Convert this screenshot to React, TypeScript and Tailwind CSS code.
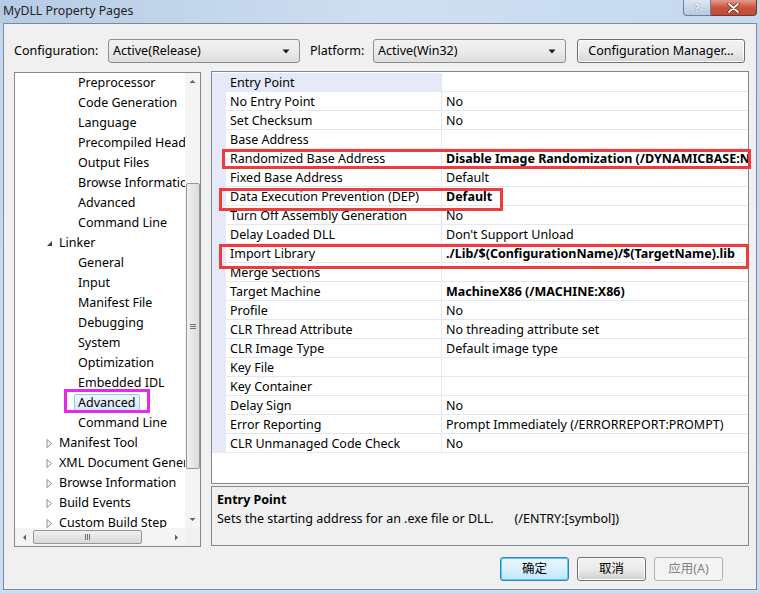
import React from "react";

type Row = { name: string; value: string; bold?: boolean };

const rows: Row[] = [
  { name: "Entry Point", value: "" },
  { name: "No Entry Point", value: "No" },
  { name: "Set Checksum", value: "No" },
  { name: "Base Address", value: "" },
  { name: "Randomized Base Address", value: "Disable Image Randomization (/DYNAMICBASE:NO)", bold: true },
  { name: "Fixed Base Address", value: "Default" },
  { name: "Data Execution Prevention (DEP)", value: "Default", bold: true },
  { name: "Turn Off Assembly Generation", value: "No" },
  { name: "Delay Loaded DLL", value: "Don't Support Unload" },
  { name: "Import Library", value: "./Lib/$(ConfigurationName)/$(TargetName).lib", bold: true },
  { name: "Merge Sections", value: "" },
  { name: "Target Machine", value: "MachineX86 (/MACHINE:X86)", bold: true },
  { name: "Profile", value: "No" },
  { name: "CLR Thread Attribute", value: "No threading attribute set" },
  { name: "CLR Image Type", value: "Default image type" },
  { name: "Key File", value: "" },
  { name: "Key Container", value: "" },
  { name: "Delay Sign", value: "No" },
  { name: "Error Reporting", value: "Prompt Immediately (/ERRORREPORT:PROMPT)" },
  { name: "CLR Unmanaged Code Check", value: "No" },
];

type TreeItem = { label: string; level: 1 | 2; arrow?: "open" | "closed"; selected?: boolean };

const tree: TreeItem[] = [
  { label: "Preprocessor", level: 2 },
  { label: "Code Generation", level: 2 },
  { label: "Language", level: 2 },
  { label: "Precompiled Headers", level: 2 },
  { label: "Output Files", level: 2 },
  { label: "Browse Information", level: 2 },
  { label: "Advanced", level: 2 },
  { label: "Command Line", level: 2 },
  { label: "Linker", level: 1, arrow: "open" },
  { label: "General", level: 2 },
  { label: "Input", level: 2 },
  { label: "Manifest File", level: 2 },
  { label: "Debugging", level: 2 },
  { label: "System", level: 2 },
  { label: "Optimization", level: 2 },
  { label: "Embedded IDL", level: 2 },
  { label: "Advanced", level: 2, selected: true },
  { label: "Command Line", level: 2 },
  { label: "Manifest Tool", level: 1, arrow: "closed" },
  { label: "XML Document Generator", level: 1, arrow: "closed" },
  { label: "Browse Information", level: 1, arrow: "closed" },
  { label: "Build Events", level: 1, arrow: "closed" },
  { label: "Custom Build Step", level: 1, arrow: "closed" },
];

function ComboArrow() {
  return (
    <svg width="8" height="5" viewBox="0 0 8 5" className="shrink-0">
      <path d="M0.5 0.5 L7.5 0.5 L4 4.5 Z" fill="#1a1a1a" />
    </svg>
  );
}

function Combo({ text, width }: { text: string; width: string }) {
  return (
    <div
      className={`${width} h-[24px] flex items-center justify-between pl-[4px] pr-[9px] rounded-[3px] border border-[#8e8f8f] bg-gradient-to-b from-[#f2f2f2] via-[#ebebeb] to-[#dddddd] text-black`}
    >
      <span>{text}</span>
      <ComboArrow />
    </div>
  );
}

function TreeArrow({ kind }: { kind: "open" | "closed" }) {
  if (kind === "open") {
    return (
      <svg width="7" height="7" viewBox="0 0 7 7">
        <path d="M6 1 L6 6 L1 6 Z" fill="#404040" />
      </svg>
    );
  }
  return (
    <svg width="7" height="9" viewBox="0 0 7 9">
      <path d="M1 0.5 L5.5 4.5 L1 8.5 Z" fill="none" stroke="#8c8c8c" strokeWidth="1" />
    </svg>
  );
}

function ScrollArrow({ dir }: { dir: "up" | "down" | "left" | "right" }) {
  const paths: Record<string, string> = {
    up: "M0.5 4 L3.5 1 L6.5 4 Z",
    down: "M0.5 1 L3.5 4 L6.5 1 Z",
    left: "M4 0.5 L1 3.5 L4 6.5 Z",
    right: "M1 0.5 L4 3.5 L1 6.5 Z",
  };
  const vertical = dir === "up" || dir === "down";
  return (
    <svg width={vertical ? 7 : 5} height={vertical ? 5 : 7} viewBox={vertical ? "0 0 7 5" : "0 0 5 7"}>
      <path d={paths[dir]} fill="#606060" />
    </svg>
  );
}

function Button({ label, kind }: { label: string; kind: "default" | "normal" | "disabled" }) {
  const styles =
    kind === "default"
      ? "border-[#3c7fb1] bg-gradient-to-b from-[#eaf6fd] via-[#d9f0fc] to-[#bee6fd] text-black shadow-[inset_0_0_0_1px_#48d2f8]"
      : kind === "normal"
      ? "border-[#707070] bg-gradient-to-b from-[#f2f2f2] via-[#ebebeb] to-[#cfcfcf] text-black shadow-[inset_0_0_0_1px_#fcfcfc]"
      : "border-[#adb2b5] bg-[#f4f4f4] text-[#838383]";
  return (
    <div className={`w-[69px] h-[24px] flex items-center justify-center rounded-[3px] border ${styles}`}>
      {label}
    </div>
  );
}

export default function App() {
  return (
    <div className="relative w-[760px] h-[593px] overflow-hidden flex flex-col bg-gradient-to-b from-[#c2d7ee] to-[#cadff3] font-['Noto_Sans','Noto_Sans_CJK_SC',sans-serif] text-[12.5px] text-black">
      {/* title bar */}
      <div className="relative h-[23px] shrink-0 bg-gradient-to-r from-[#b6cbe4] via-[#cfdff1] to-[#c5d9ef]">
        <div className="absolute left-[3px] top-[1px] text-[12.3px] leading-[20px] text-[#1e1e1e]">
          MyDLL Property Pages
        </div>
        <div className="absolute right-[3px] top-0 flex">
          <div className="w-[28px] h-[16px] flex items-center justify-center rounded-bl-[4px] border border-t-0 border-[#6d7f99] bg-gradient-to-b from-[#dce6f3] to-[#b8c9de] text-[11px] font-bold leading-none text-white [text-shadow:0_0_1px_#333]">
            ?
          </div>
          <div className="w-[46px] h-[16px] flex items-center justify-center rounded-br-[4px] border border-l-0 border-t-0 border-[#6d3a30] bg-gradient-to-b from-[#e59b8b] via-[#c8553f] to-[#c44a33]">
            <svg width="13" height="10" viewBox="0 0 13 10">
              <path d="M2 1 L11 9 M11 1 L2 9" stroke="#5a2418" strokeWidth="3.2" strokeLinecap="round" />
              <path d="M2 1 L11 9 M11 1 L2 9" stroke="#ffffff" strokeWidth="1.8" strokeLinecap="round" />
            </svg>
          </div>
        </div>
      </div>

      {/* client area */}
      <div className="flex-1 mx-[3px] mb-[3px] border border-[#7a8a9c] bg-[#f0f0f0] flex flex-col pl-[10px] pr-[8px] pt-[15px]">
        {/* configuration row */}
        <div className="flex items-center h-[24px]">
          <span className="w-[94px]">Configuration:</span>
          <Combo text="Active(Release)" width="w-[192px]" />
          <span className="ml-[10px] w-[63px]">Platform:</span>
          <Combo text="Active(Win32)" width="w-[193px]" />
          <div className="ml-[11px] w-[168px] h-[24px] flex items-center justify-center rounded-[3px] border border-[#707070] bg-gradient-to-b from-[#f2f2f2] via-[#ebebeb] to-[#d6d6d6] shadow-[inset_0_0_0_1px_#fcfcfc]">
            Configuration Manager...
          </div>
        </div>

        {/* main area */}
        <div className="flex mt-[8px] h-[475px]">
          {/* tree */}
          <div className="mt-[1px] w-[187px] h-[475px] border border-[#828790] bg-white flex flex-col">
            <div className="flex flex-1 min-h-0">
              <div className="flex-1 min-w-0 overflow-hidden">
                {tree.map((t, i) => (
                  <div key={i} className="h-[20px] flex items-center whitespace-nowrap">
                    {t.level === 1 ? (
                      <div className="flex items-center pl-[31px]">
                        <div className="w-[13px] flex items-center">{t.arrow && <TreeArrow kind={t.arrow} />}</div>
                        <span>{t.label}</span>
                      </div>
                    ) : t.selected ? (
                      <div className="pl-[59px]">
                        <div className="h-[19px] flex items-center px-[3px] rounded-[2px] border border-[#99c4ea] bg-gradient-to-b from-[#f1f7fe] to-[#d2e5fb]">
                          {t.label}
                        </div>
                      </div>
                    ) : (
                      <span className="pl-[63px]">{t.label}</span>
                    )}
                  </div>
                ))}
              </div>
              {/* vertical scrollbar */}
              <div className="w-[15px] shrink-0 bg-[#f4f4f4] flex flex-col items-center">
                <div className="h-[17px] flex items-center justify-center">
                  <ScrollArrow dir="up" />
                </div>
                <div className="flex-1 w-full relative">
                  <div className="absolute left-[1px] right-0 top-[93px] h-[286px] rounded-[2px] border border-[#979797] bg-gradient-to-r from-[#f0f0f0] to-[#dcdcdc] flex items-center justify-center">
                    <div className="flex flex-col gap-[1px]">
                      <div className="w-[6px] h-[1px] bg-[#6f6f6f]" />
                      <div className="w-[6px] h-[1px] bg-[#6f6f6f]" />
                      <div className="w-[6px] h-[1px] bg-[#6f6f6f]" />
                    </div>
                  </div>
                </div>
                <div className="h-[17px] flex items-center justify-center">
                  <ScrollArrow dir="down" />
                </div>
              </div>
            </div>
            {/* horizontal scrollbar */}
            <div className="h-[18px] shrink-0 flex">
              <div className="flex-1 bg-[#f4f4f4] flex items-center">
                <div className="w-[18px] flex justify-center">
                  <ScrollArrow dir="left" />
                </div>
                <div className="flex-1 relative h-full">
                  <div className="absolute left-0 top-[2px] w-[109px] h-[14px] rounded-[2px] border border-[#979797] bg-gradient-to-b from-[#f0f0f0] to-[#d8d8d8] flex items-center justify-center gap-[1px]">
                    <div className="w-[1px] h-[6px] bg-[#6f6f6f]" />
                    <div className="w-[1px] h-[6px] bg-[#6f6f6f]" />
                    <div className="w-[1px] h-[6px] bg-[#6f6f6f]" />
                  </div>
                </div>
                <div className="w-[18px] flex justify-center">
                  <ScrollArrow dir="right" />
                </div>
              </div>
              <div className="w-[15px] bg-[#f0f0f0]" />
            </div>
          </div>

          {/* right side: grid + description */}
          <div className="ml-[10px] w-[538px] flex flex-col">
            <div className="h-[414px] border border-[#828790] bg-white flex flex-col pt-[1px]">
              {rows.map((r, i) => (
                <div key={i} className="h-[19px] flex leading-[20px]">
                  <div className="w-[14px] shrink-0 bg-[#e6e9f7]" />
                  <div
                    className={`w-[216px] shrink-0 pl-[4px] border-r border-b border-[#e3e6f3] whitespace-nowrap overflow-hidden ${
                      i === 0 ? "bg-[#e6e9f7]" : ""
                    }`}
                  >
                    {r.name}
                  </div>
                  <div
                    className={`flex-1 min-w-0 pl-[4px] border-b border-[#e3e6f3] whitespace-nowrap overflow-hidden ${
                      r.bold ? "font-bold" : ""
                    }`}
                  >
                    {r.value}
                  </div>
                </div>
              ))}
              <div className="flex-1 flex">
                <div className="w-[14px] bg-white" />
              </div>
            </div>
            <div className="mt-[2px] h-[60px] border border-[#828790] bg-[#f0f0f0] pl-[5px] pt-[3px] leading-[19px]">
              <div className="font-bold">Entry Point</div>
              <div className="whitespace-nowrap">
                Sets the starting address for an .exe file or DLL.
                <span className="ml-[21px]">(/ENTRY:[symbol])</span>
              </div>
            </div>
          </div>
        </div>

        {/* dialog buttons */}
        <div className="flex justify-end gap-[8px] mt-[11px] pr-[25px]">
          <Button label="确定" kind="default" />
          <Button label="取消" kind="normal" />
          <Button label="应用(A)" kind="disabled" />
        </div>
      </div>

      {/* highlight marks */}
      <div className="absolute left-[222px] top-[149px] w-[529px] h-[20px] border-[3px] border-[#ee3b3b]" />
      <div className="absolute left-[219px] top-[188px] w-[284px] h-[23px] border-[3px] border-[#ee3b3b]" />
      <div className="absolute left-[219px] top-[244px] w-[530px] h-[25px] border-[3px] border-[#ee3b3b]" />
      <div className="absolute left-[64px] top-[389px] w-[86px] h-[24px] border-[3px] border-[#e828e8]" />
    </div>
  );
}
